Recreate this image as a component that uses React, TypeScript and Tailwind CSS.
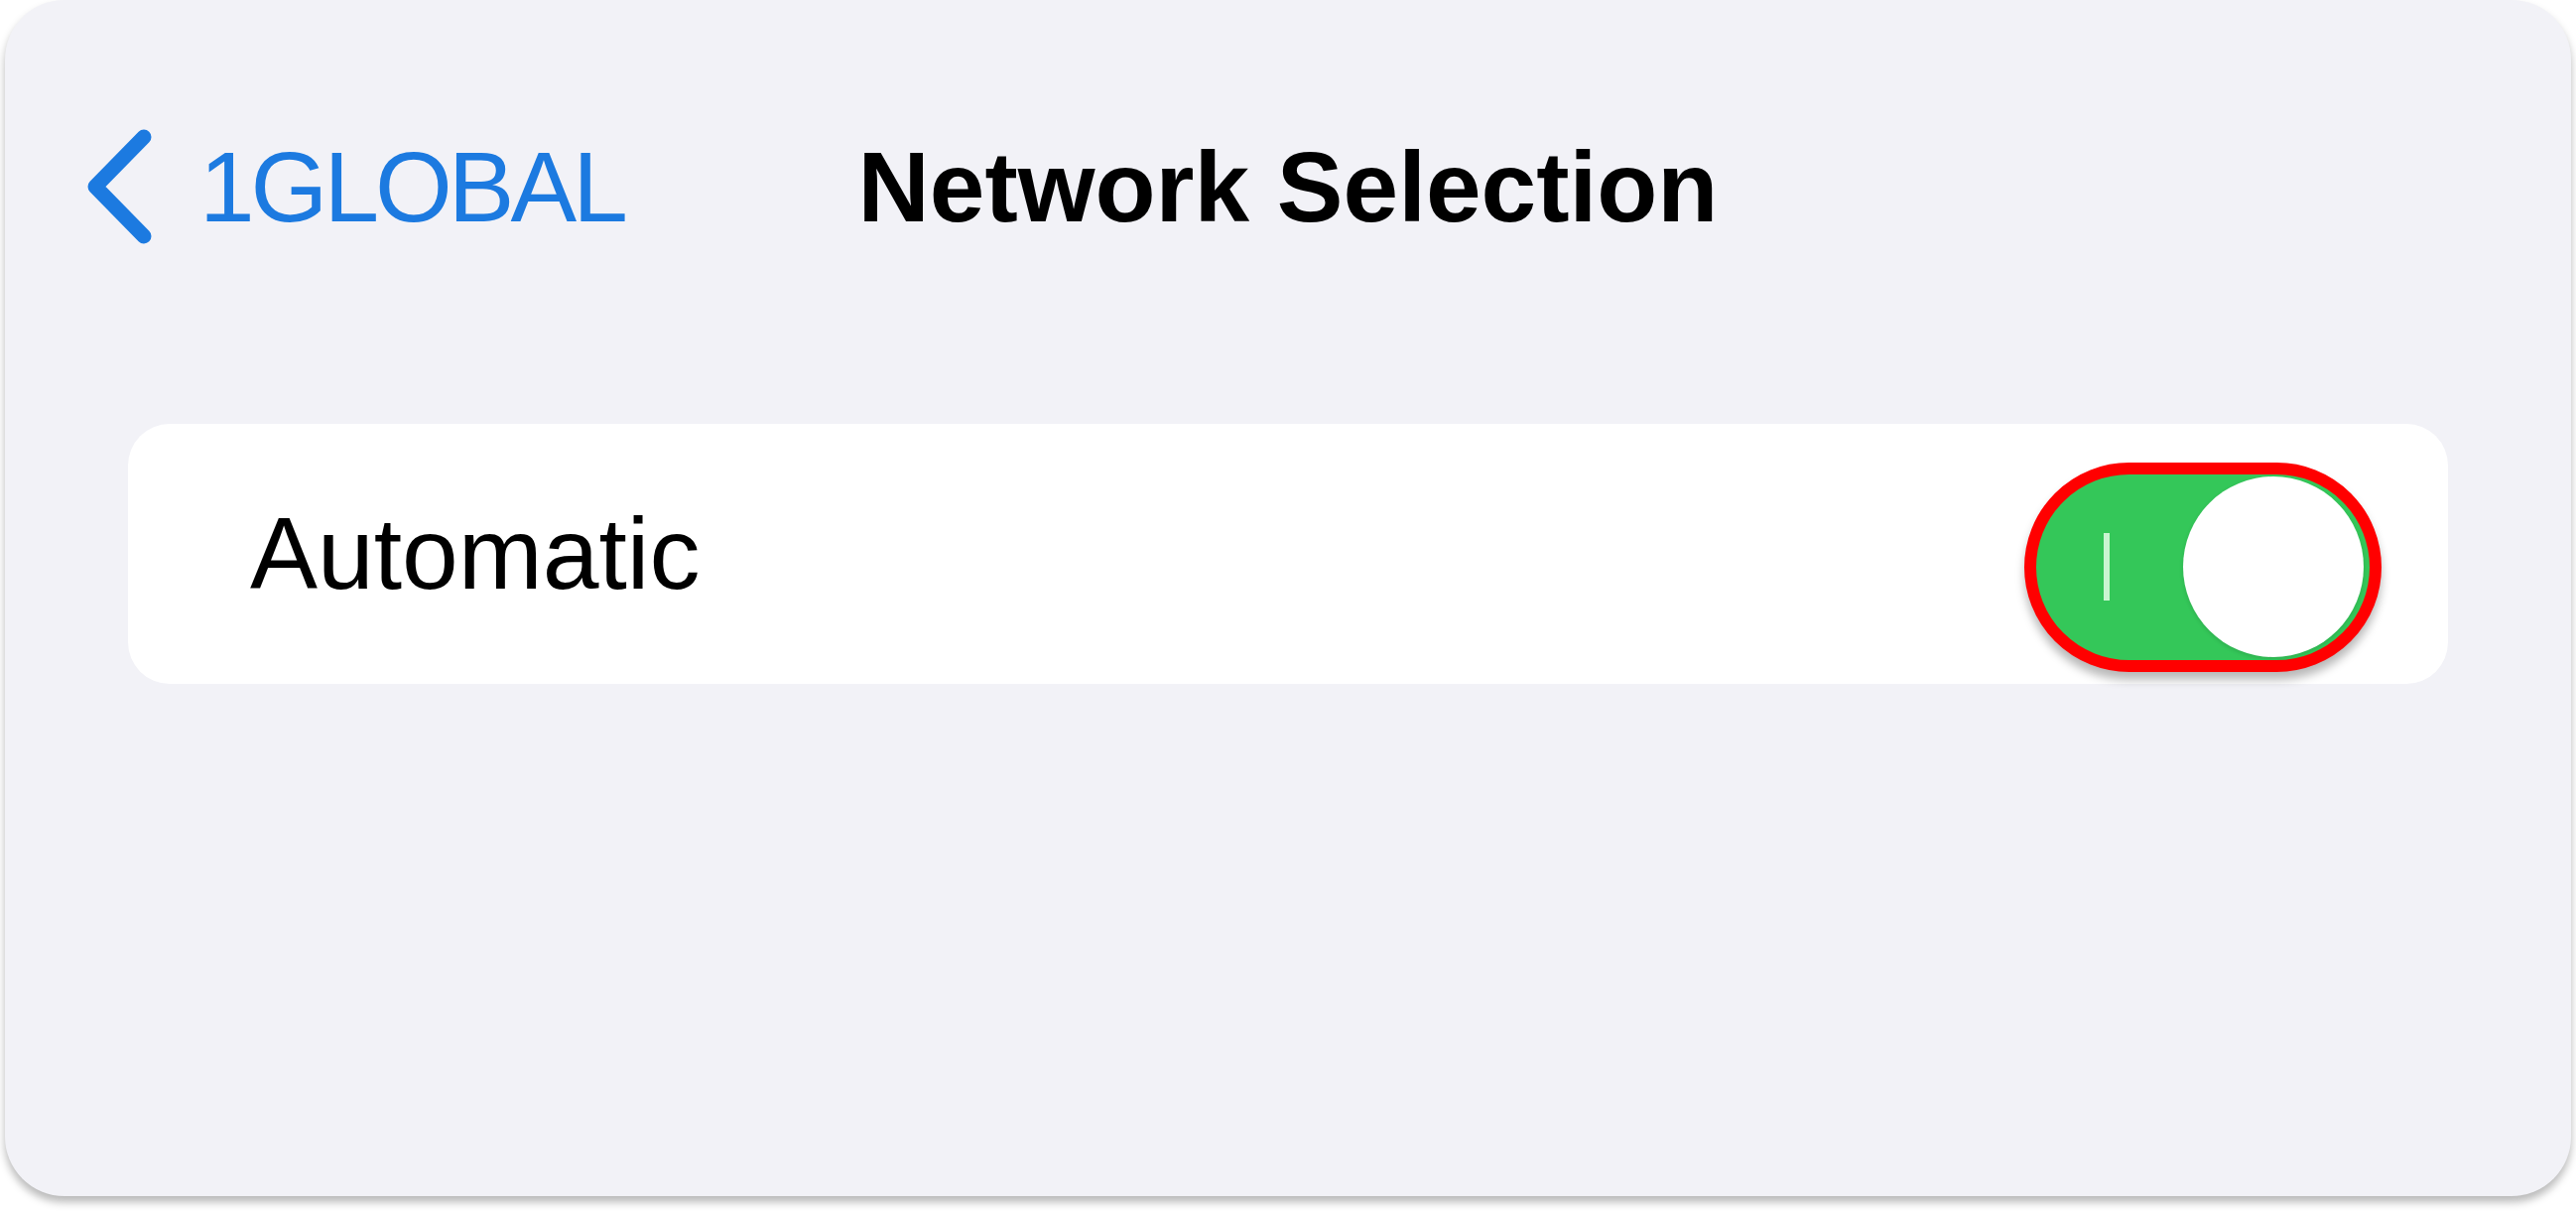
import React from "react";

function BackChevron() {
  return (
    <svg width="72" height="116" viewBox="0 0 72 116" fill="none">
      <path
        d="M60 8 L11 58 L60 108"
        stroke="#1c7ae0"
        strokeWidth="15"
        strokeLinecap="round"
        strokeLinejoin="round"
      />
    </svg>
  );
}

function Toggle() {
  return (
    <div className="mt-[26px] flex h-[211px] w-[360px] items-center rounded-full border-[12px] border-[#ff0000] bg-[#34c759] shadow-[0_8px_10px_rgba(0,0,0,0.28)]">
      <div className="flex flex-1 items-center justify-center pr-[6px]">
        <div className="h-[68px] w-[6px] bg-[#c9f5d1]" />
      </div>
      <div className="mr-[6px] h-[182px] w-[182px] rounded-full bg-white shadow-[0_2px_4px_rgba(0,0,0,0.12)]" />
    </div>
  );
}

export default function App() {
  return (
    <div className="h-[1220px] w-[2596px] bg-white font-['Liberation_Sans',Arial,sans-serif]">
      <div className="ml-[5px] h-[1205px] w-[2586px] rounded-[60px] bg-[#f2f2f7] shadow-[0_6px_8px_rgba(0,0,0,0.28)]">
        {/* Nav bar */}
        <div className="box-content grid h-[120px] grid-cols-[1fr_auto_1fr] items-center pt-[128px]">
          <div className="flex items-center pl-[80px]">
            <BackChevron />
            <span className="ml-[44px] text-[100px] leading-none tracking-[-4px] text-[#1c7ae0]">
              1GLOBAL
            </span>
          </div>
          <h1 className="text-[100px] font-bold leading-none text-black">
            Network Selection
          </h1>
          <div />
        </div>

        {/* Settings group */}
        <div className="mx-[124px] mt-[179px] flex h-[262px] items-center justify-between rounded-[42px] bg-white pl-[123px] pr-[67px]">
          <span className="text-[102px] leading-none text-black">Automatic</span>
          <Toggle />
        </div>
      </div>
    </div>
  );
}
